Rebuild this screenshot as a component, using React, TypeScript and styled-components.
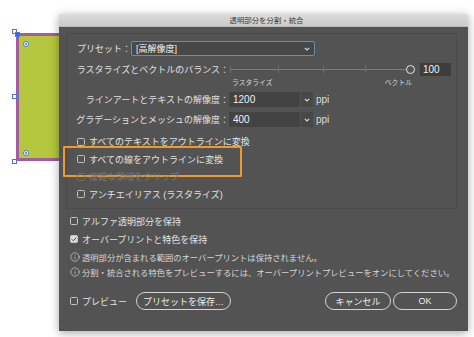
import styled, { createGlobalStyle } from "styled-components"
import { Check, Info } from "lucide-react"

const GlobalStyle = createGlobalStyle`
  html, body {
    margin: 0;
    padding: 0;
    background: #ffffff;
  }
  body {
    font-family: "Liberation Sans", "Noto Sans CJK JP", sans-serif;
  }
  * {
    box-sizing: border-box;
  }
`

const Stage = styled.div`
  position: relative;
  width: 474px;
  height: 337px;
  overflow: hidden;
  background: #ffffff;
`

// artwork on the canvas behind the dialog
const Artwork = styled.div`
  position: absolute;
  left: 16px;
  top: 33px;
  width: 52px;
  height: 128px;
  background: #b5c63f;
  border: 3px solid #a25d9d;
`

const Handle = styled.div<{ $x: number; $y: number; $filled?: boolean }>`
  position: absolute;
  left: ${(p) => p.$x}px;
  top: ${(p) => p.$y}px;
  width: 5px;
  height: 5px;
  background: ${(p) => (p.$filled ? "#2f6fe0" : "#ffffff")};
  border: 1px solid #4a78d6;
`

const Corner = styled.div<{ $x: number; $y: number }>`
  position: absolute;
  left: ${(p) => p.$x}px;
  top: ${(p) => p.$y}px;
  width: 6px;
  height: 6px;
  border-radius: 50%;
  background: #ffffff;
  border: 1px solid #4a78d6;

  &::after {
    content: "";
    position: absolute;
    left: 1px;
    top: 1px;
    width: 2px;
    height: 2px;
    border-radius: 50%;
    background: #2f6fe0;
  }
`

const Dialog = styled.div`
  position: absolute;
  left: 59px;
  top: 14px;
  width: 409px;
  height: 317px;
  background: #535353;
  box-shadow: 0 2px 9px rgba(0, 0, 0, 0.35);
  display: flex;
  flex-direction: column;
  color: #e2e2e2;
  font-size: 9px;
`

const TitleBar = styled.div`
  height: 13px;
  line-height: 13px;
  text-align: center;
  font-size: 7.4px;
  color: #3a3a3a;
  background: linear-gradient(#dcdcdc, #cbcbcb);
  border-bottom: 1px solid #b8b8b8;
  padding-left: 6px;
`

const Body = styled.div`
  flex: 1;
  display: flex;
  flex-direction: column;
  padding: 6px 11px 0 7px;
`

const Panel = styled.div`
  border: 1px solid #4a4a4a;
  border-radius: 2px;
  display: flex;
  flex-direction: column;
  padding-bottom: 5px;
`

const PresetRow = styled.div`
  margin-top: 7px;
  height: 15px;
  display: flex;
  align-items: center;
  padding-left: 10px;
`

const Dropdown = styled.div`
  width: 184px;
  height: 15px;
  display: flex;
  align-items: center;
  justify-content: space-between;
  padding: 0 4px 0 4px;
  background: #474747;
  border: 1.5px solid #6a8db4;
  border-radius: 2px;
  color: #f0f0f0;
`

const FieldRow = styled.div<{ $mt: number; $h: number }>`
  margin-top: ${(p) => p.$mt}px;
  height: ${(p) => p.$h}px;
  display: grid;
  grid-template-columns: 162px 1fr;
  align-items: center;
`

const Label = styled.div`
  text-align: right;
  white-space: nowrap;
  color: #e0e0e0;
`

const SliderArea = styled.div`
  display: flex;
  align-items: center;
  height: 100%;
`

const Track = styled.div`
  position: relative;
  width: 176px;
  height: 1px;
  margin-left: 1px;
  background: #7c7c7c;
`

const Tick = styled.div<{ $x: number }>`
  position: absolute;
  left: ${(p) => p.$x}px;
  top: -3px;
  width: 1px;
  height: 7px;
  background: #6f6f6f;
`

const Knob = styled.div`
  width: 9px;
  height: 9px;
  border-radius: 50%;
  border: 1.5px solid #e8e8e8;
  background: #535353;
`

const ValueBox = styled.div`
  margin-left: 5px;
  width: 31px;
  height: 13px;
  background: #3d3d3d;
  color: #f2f2f2;
  font-size: 10px;
  line-height: 13px;
  padding-left: 3px;
`

const SubLabels = styled.div`
  margin-top: 1px;
  margin-left: 165px;
  width: 180px;
  height: 10px;
  display: flex;
  justify-content: space-between;
  align-items: center;
  font-size: 6.8px;
  color: #d6d6d6;
`

const InputWrap = styled.div`
  display: flex;
  align-items: center;
  height: 100%;
`

const NumberBox = styled.div`
  width: 71px;
  height: 100%;
  background: #434343;
  color: #f0f0f0;
  font-size: 10px;
  line-height: 15px;
  padding-left: 4px;
`

const ChevronBox = styled.div`
  width: 12px;
  height: 100%;
  margin-left: 1px;
  background: #484848;
  display: flex;
  align-items: center;
  justify-content: center;
`

const Unit = styled.span`
  margin-left: 3px;
  font-size: 10px;
  color: #dedede;
`

const CheckList = styled.div`
  margin-top: 6px;
  padding-left: 10px;
  display: flex;
  flex-direction: column;
`

const CheckRow = styled.div<{ $h?: number; $highlight?: boolean; $disabled?: boolean }>`
  position: relative;
  height: ${(p) => p.$h ?? 17.5}px;
  display: flex;
  align-items: center;
  gap: 4px;
  white-space: nowrap;
  color: ${(p) => (p.$disabled ? "#777777" : "#e2e2e2")};

  ${(p) =>
    p.$highlight &&
    `
    &::before {
      content: "";
      position: absolute;
      left: -14px;
      top: -4.5px;
      width: 175px;
      height: 27px;
      border: 2px solid #ee9a2a;
      border-radius: 1px;
      pointer-events: none;
    }
  `}
`

const Box = styled.span<{ $checked?: boolean; $disabled?: boolean }>`
  width: 8px;
  height: 8px;
  flex: none;
  border: 1px solid ${(p) => (p.$disabled ? "#6e6e6e" : "#c4c4c4")};
  border-radius: 1.5px;
  background: ${(p) => (p.$checked ? "#dadada" : "transparent")};
  display: flex;
  align-items: center;
  justify-content: center;
  color: #3a3a3a;
`

const Options = styled.div`
  margin-top: 3px;
  padding-left: 4px;
  display: flex;
  flex-direction: column;
`

const InfoRow = styled.div<{ $mt?: number }>`
  margin-top: ${(p) => p.$mt ?? 0}px;
  height: 15px;
  display: flex;
  align-items: center;
  gap: 2px;
  font-size: 8.3px;
  color: #d6d6d6;
  white-space: nowrap;
`

const Footer = styled.div`
  margin-top: 12.5px;
  height: 18px;
  padding-left: 4px;
  display: flex;
  align-items: center;
`

const PillButton = styled.div<{ $w: number; $ml?: number }>`
  width: ${(p) => p.$w}px;
  margin-left: ${(p) => p.$ml ?? 0}px;
  height: 18px;
  border: 1.5px solid #d4d4d4;
  border-radius: 9px;
  display: flex;
  align-items: center;
  justify-content: center;
  color: #ececec;
  font-size: 9px;
  white-space: nowrap;
`

const Spacer = styled.div`
  flex: 1;
`

function Chevron() {
  return (
    <svg width="6" height="4" viewBox="0 0 6 4">
      <path d="M0.8 0.8 L3 3 L5.2 0.8" fill="none" stroke="#d8d8d8" strokeWidth="1.1" />
    </svg>
  )
}

function Checkbox({ label, checked, disabled }: { label: string; checked?: boolean; disabled?: boolean }) {
  return (
    <>
      <Box $checked={checked} $disabled={disabled}>
        {checked && <Check size={7} strokeWidth={3.5} />}
      </Box>
      <span>{label}</span>
    </>
  )
}

export default function App() {
  return (
    <Stage>
      <GlobalStyle />
      <Artwork>
        <Corner $x={4} $y={5} />
        <Corner $x={4} $y={114} />
      </Artwork>
      <Handle $x={12} $y={29} />
      <Handle $x={15} $y={32} $filled />
      <Handle $x={12} $y={94} />
      <Handle $x={12} $y={159} />

      <Dialog>
        <TitleBar>透明部分を分割・統合</TitleBar>
        <Body>
          <Panel>
            <PresetRow>
              <span>プリセット：</span>
              <Dropdown>
                <span>[高解像度]</span>
                <Chevron />
              </Dropdown>
            </PresetRow>

            <FieldRow $mt={7} $h={13}>
              <Label>ラスタライズとベクトルのバランス：</Label>
              <SliderArea>
                <Track>
                  <Tick $x={0} />
                  <Tick $x={48} />
                  <Tick $x={93} />
                  <Tick $x={135} />
                </Track>
                <Knob />
                <ValueBox>100</ValueBox>
              </SliderArea>
            </FieldRow>
            <SubLabels>
              <span>ラスタライズ</span>
              <span>ベクトル</span>
            </SubLabels>

            <FieldRow $mt={5} $h={15}>
              <Label>ラインアートとテキストの解像度：</Label>
              <InputWrap>
                <NumberBox>1200</NumberBox>
                <ChevronBox>
                  <Chevron />
                </ChevronBox>
                <Unit>ppi</Unit>
              </InputWrap>
            </FieldRow>

            <FieldRow $mt={5} $h={15}>
              <Label>グラデーションとメッシュの解像度：</Label>
              <InputWrap>
                <NumberBox>400</NumberBox>
                <ChevronBox>
                  <Chevron />
                </ChevronBox>
                <Unit>ppi</Unit>
              </InputWrap>
            </FieldRow>

            <CheckList>
              <CheckRow>
                <Checkbox label="すべてのテキストをアウトラインに変換" />
              </CheckRow>
              <CheckRow $highlight>
                <Checkbox label="すべての線をアウトラインに変換" />
              </CheckRow>
              <CheckRow $disabled>
                <Checkbox label="複雑な領域をクリップ" disabled />
              </CheckRow>
              <CheckRow>
                <Checkbox label="アンチエイリアス (ラスタライズ)" />
              </CheckRow>
            </CheckList>
          </Panel>

          <Options>
            <CheckRow $h={18}>
              <Checkbox label="アルファ透明部分を保持" />
            </CheckRow>
            <CheckRow $h={18}>
              <Checkbox label="オーバープリントと特色を保持" checked />
            </CheckRow>
            <InfoRow $mt={1.5}>
              <Info size={10} strokeWidth={1.6} />
              <span>透明部分が含まれる範囲のオーバープリントは保持されません。</span>
            </InfoRow>
            <InfoRow>
              <Info size={10} strokeWidth={1.6} />
              <span>分割・統合される特色をプレビューするには、オーバープリントプレビューをオンにしてください。</span>
            </InfoRow>
          </Options>

          <Footer>
            <CheckRow $h={18}>
              <Checkbox label="プレビュー" />
            </CheckRow>
            <PillButton $w={95} $ml={9}>
              プリセットを保存…
            </PillButton>
            <Spacer />
            <PillButton $w={66}>キャンセル</PillButton>
            <PillButton $w={64} $ml={2}>
              OK
            </PillButton>
          </Footer>
        </Body>
      </Dialog>
    </Stage>
  )
}
